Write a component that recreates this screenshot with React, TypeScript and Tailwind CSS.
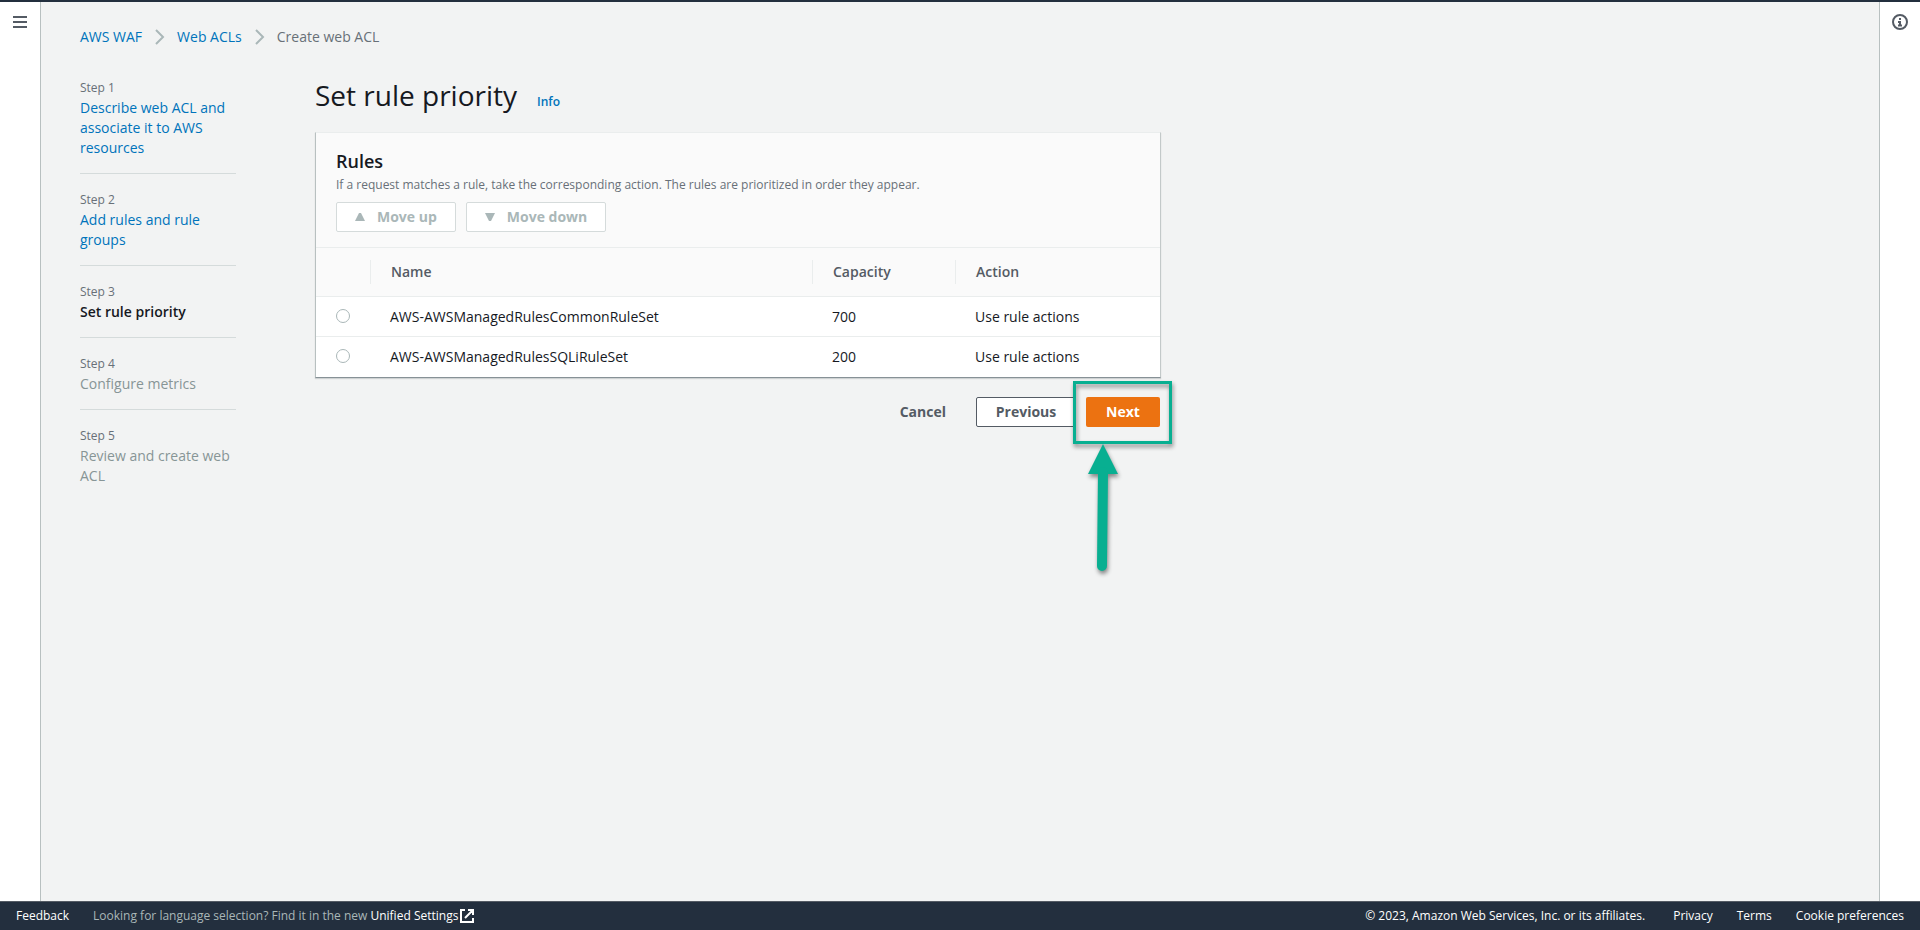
import { useState } from "react";

interface Step {
	title: string;
	state: "done" | "current" | "upcoming";
}

interface Rule {
	name: string;
	capacity: number;
	action: string;
}

const steps: Step[] = [
	{ title: "Describe web ACL and associate it to AWS resources", state: "done" },
	{ title: "Add rules and rule groups", state: "done" },
	{ title: "Set rule priority", state: "current" },
	{ title: "Configure metrics", state: "upcoming" },
	{ title: "Review and create web ACL", state: "upcoming" },
];

const rules: Rule[] = [
	{
		name: "AWS-AWSManagedRulesCommonRuleSet",
		capacity: 700,
		action: "Use rule actions",
	},
	{
		name: "AWS-AWSManagedRulesSQLiRuleSet",
		capacity: 200,
		action: "Use rule actions",
	},
];

const BreadcrumbArrow = () => (
	<svg
		className="mx-3 h-4 w-[11px] text-[#aab7b8]"
		fill="none"
		stroke="currentColor"
		strokeWidth={2}
		viewBox="0 0 11 16"
		aria-hidden="true"
	>
		<path d="M2 1l7 7-7 7" />
	</svg>
);

const Breadcrumbs = () => (
	<nav aria-label="Breadcrumbs" className="flex items-center leading-5">
		<a href="#waf" className="text-[#0073bb] hover:underline">
			AWS WAF
		</a>
		<BreadcrumbArrow />
		<a href="#acls" className="text-[#0073bb] hover:underline">
			Web ACLs
		</a>
		<BreadcrumbArrow />
		<span className="text-[#687078]">Create web ACL</span>
	</nav>
);

const StepList = () => (
	<ol className="w-[156px] shrink-0">
		{steps.map((step, index) => (
			<li
				key={step.title}
				className="mb-4 border-b border-[#d5dbdb] pb-[15px] leading-5 last:mb-0 last:border-b-0"
			>
				<div className="text-xs leading-5 text-[#687078]">Step {index + 1}</div>
				{step.state === "done" && (
					<a href={`#step-${index + 1}`} className="block text-[#0073bb]">
						{step.title}
					</a>
				)}
				{step.state === "current" && (
					<div className="font-semibold text-[#16191f]">{step.title}</div>
				)}
				{step.state === "upcoming" && (
					<div className="text-[#879596]">{step.title}</div>
				)}
			</li>
		))}
	</ol>
);

const RulesCard = () => {
	const [selected, setSelected] = useState<string | null>(null);

	const moveButton =
		"flex h-[30px] items-center gap-3 rounded-xs border border-[#d5dbdb] bg-white px-[18px] font-bold text-[#aab7b8]";
	const heading =
		"relative py-[14px] pl-[21px] text-left leading-5 font-semibold text-[#545b64] before:absolute before:inset-y-3 before:left-0 before:w-px before:bg-[#eaeded]";

	return (
		<section className="border border-t-[#eaeded] border-r-[#c3c9c9] border-b-[#879196] border-l-[#b8c0c0] bg-white shadow-[0_1px_1px_0_rgba(0,28,36,0.15)]">
			<div className="border-b border-[#eaeded] bg-[#fafafa] px-5 pt-4 pb-[15px]">
				<h2 className="text-lg leading-6 font-semibold">Rules</h2>
				<p className="mt-[2px] text-xs leading-5 text-[#687078]">
					If a request matches a rule, take the corresponding action. The rules
					are prioritized in order they appear.
				</p>
				<div className="mt-[7px] flex gap-[10px]">
					<button type="button" disabled className={moveButton}>
						<svg
							className="size-[10px]"
							fill="currentColor"
							viewBox="0 0 10 10"
							aria-hidden="true"
						>
							<path d="M4 1h2l4 8H0z" />
						</svg>
						Move up
					</button>
					<button type="button" disabled className={moveButton}>
						<svg
							className="size-[10px]"
							fill="currentColor"
							viewBox="0 0 10 10"
							aria-hidden="true"
						>
							<path d="M0 1h10L6 9H4z" />
						</svg>
						Move down
					</button>
				</div>
			</div>

			<table className="w-full table-fixed border-collapse">
				<colgroup>
					<col className="w-[54px]" />
					<col />
					<col className="w-[143px]" />
					<col className="w-[205px]" />
				</colgroup>
				<thead className="bg-[#fafafa]">
					<tr className="border-b border-[#eaeded]">
						<td />
						<th className={heading}>Name</th>
						<th className={heading}>Capacity</th>
						<th className={heading}>Action</th>
					</tr>
				</thead>
				<tbody>
					{rules.map((rule) => (
						<tr
							key={rule.name}
							className="h-10 border-b border-[#eaeded] last:border-b-0"
						>
							<td className="pb-[2px] pl-5">
								<input
									type="radio"
									name="rule"
									aria-label={rule.name}
									checked={selected === rule.name}
									onChange={() => setSelected(rule.name)}
									className="block size-[14px] appearance-none rounded-full border border-[#aab7b8] bg-white checked:border-4 checked:border-[#0073bb]"
								/>
							</td>
							<td className="pl-5">{rule.name}</td>
							<td className="pl-5">{rule.capacity}</td>
							<td className="pl-5">{rule.action}</td>
						</tr>
					))}
				</tbody>
			</table>
		</section>
	);
};

const NextHighlight = () => (
	<>
		<div className="pointer-events-none absolute -top-4 -right-3 -bottom-[17px] -left-[13px] border-3 border-[#08af91] drop-shadow-[1px_3px_2px_rgba(0,0,0,0.45)]" />
		<svg
			className="pointer-events-none absolute top-[47px] left-0 h-[132px] w-9 overflow-visible drop-shadow-[1px_3px_2px_rgba(0,0,0,0.45)]"
			viewBox="0 0 36 132"
			aria-hidden="true"
		>
			<path d="M17 0l15 30H2z" fill="#08af91" />
			<path
				d="M17 28l-1 94"
				stroke="#08af91"
				strokeWidth={10}
				strokeLinecap="round"
			/>
		</svg>
	</>
);

const Footer = () => (
	<footer className="flex h-[29px] shrink-0 items-center justify-between border-t border-[#545b64] bg-[#232f3e] px-4 text-xs text-white">
		<div className="flex items-center">
			<button type="button" className="mr-6 font-medium">
				Feedback
			</button>
			<span className="text-[#aab7b8]">
				Looking for language selection? Find it in the new&nbsp;
			</span>
			<a href="#settings" className="flex items-center gap-[2px] font-medium">
				Unified Settings
				<svg
					className="size-[14px]"
					fill="none"
					stroke="currentColor"
					strokeWidth={2}
					viewBox="0 0 14 14"
					aria-hidden="true"
				>
					<path d="M5 1H1v12h12V9M8 1h5v5M13 1L5 9" />
				</svg>
			</a>
		</div>
		<div className="flex items-center gap-6 font-medium">
			<span className="mr-1">
				© 2023, Amazon Web Services, Inc. or its affiliates.
			</span>
			<a href="#privacy">Privacy</a>
			<a href="#terms">Terms</a>
			<a href="#cookies">Cookie preferences</a>
		</div>
	</footer>
);

const App = () => {
	return (
		<div className="flex min-h-screen flex-col border-t-2 border-[#232f3e] bg-[#f2f3f3] font-['Open_Sans',sans-serif] text-sm text-[#16191f]">
			<div className="flex grow">
				<aside className="w-[41px] shrink-0 border-r border-[#b8c0c0] bg-white pt-[14px] pl-[13px]">
					<button type="button" aria-label="Open navigation" className="block">
						<svg
							className="h-3 w-[14px] text-[#545b64]"
							stroke="currentColor"
							strokeWidth={2}
							viewBox="0 0 14 12"
						>
							<path d="M0 1h14M0 6h14M0 11h14" />
						</svg>
					</button>
				</aside>

				<main className="grow px-[39px] pt-[25px]">
					<Breadcrumbs />
					<div className="mt-[31px] flex items-start">
						<StepList />
						<div className="ml-[79px] max-w-[846px] grow">
							<div className="flex items-baseline gap-5">
								<h1 className="text-[28px] leading-[34px]">
									Set rule priority
								</h1>
								<a href="#info" className="text-xs font-semibold text-[#0073bb]">
									Info
								</a>
							</div>
							<div className="mt-5">
								<RulesCard />
							</div>
							<div className="mt-[19px] flex justify-end gap-[10px] pr-px font-bold text-[#545b64]">
								<button type="button" className="h-[30px] px-5">
									Cancel
								</button>
								<button
									type="button"
									className="h-[30px] w-[100px] rounded-xs border border-[#545b64] bg-white"
								>
									Previous
								</button>
								<div className="relative">
									<button
										type="button"
										className="h-[30px] w-[74px] rounded-xs bg-[#ec7211] text-white"
									>
										Next
									</button>
									<NextHighlight />
								</div>
							</div>
						</div>
					</div>
				</main>

				<aside className="w-[41px] shrink-0 border-l border-[#b8c0c0] bg-white pt-3 pl-3">
					<button type="button" aria-label="Open help panel" className="block">
						<svg
							className="size-4 text-[#545b64]"
							fill="none"
							stroke="currentColor"
							strokeWidth={2}
							viewBox="0 0 16 16"
						>
							<circle cx="8" cy="8" r="7" />
							<path d="M8 4v2M6 8h2v3M6 11.5h4" />
						</svg>
					</button>
				</aside>
			</div>
			<Footer />
		</div>
	);
};

export default App;
